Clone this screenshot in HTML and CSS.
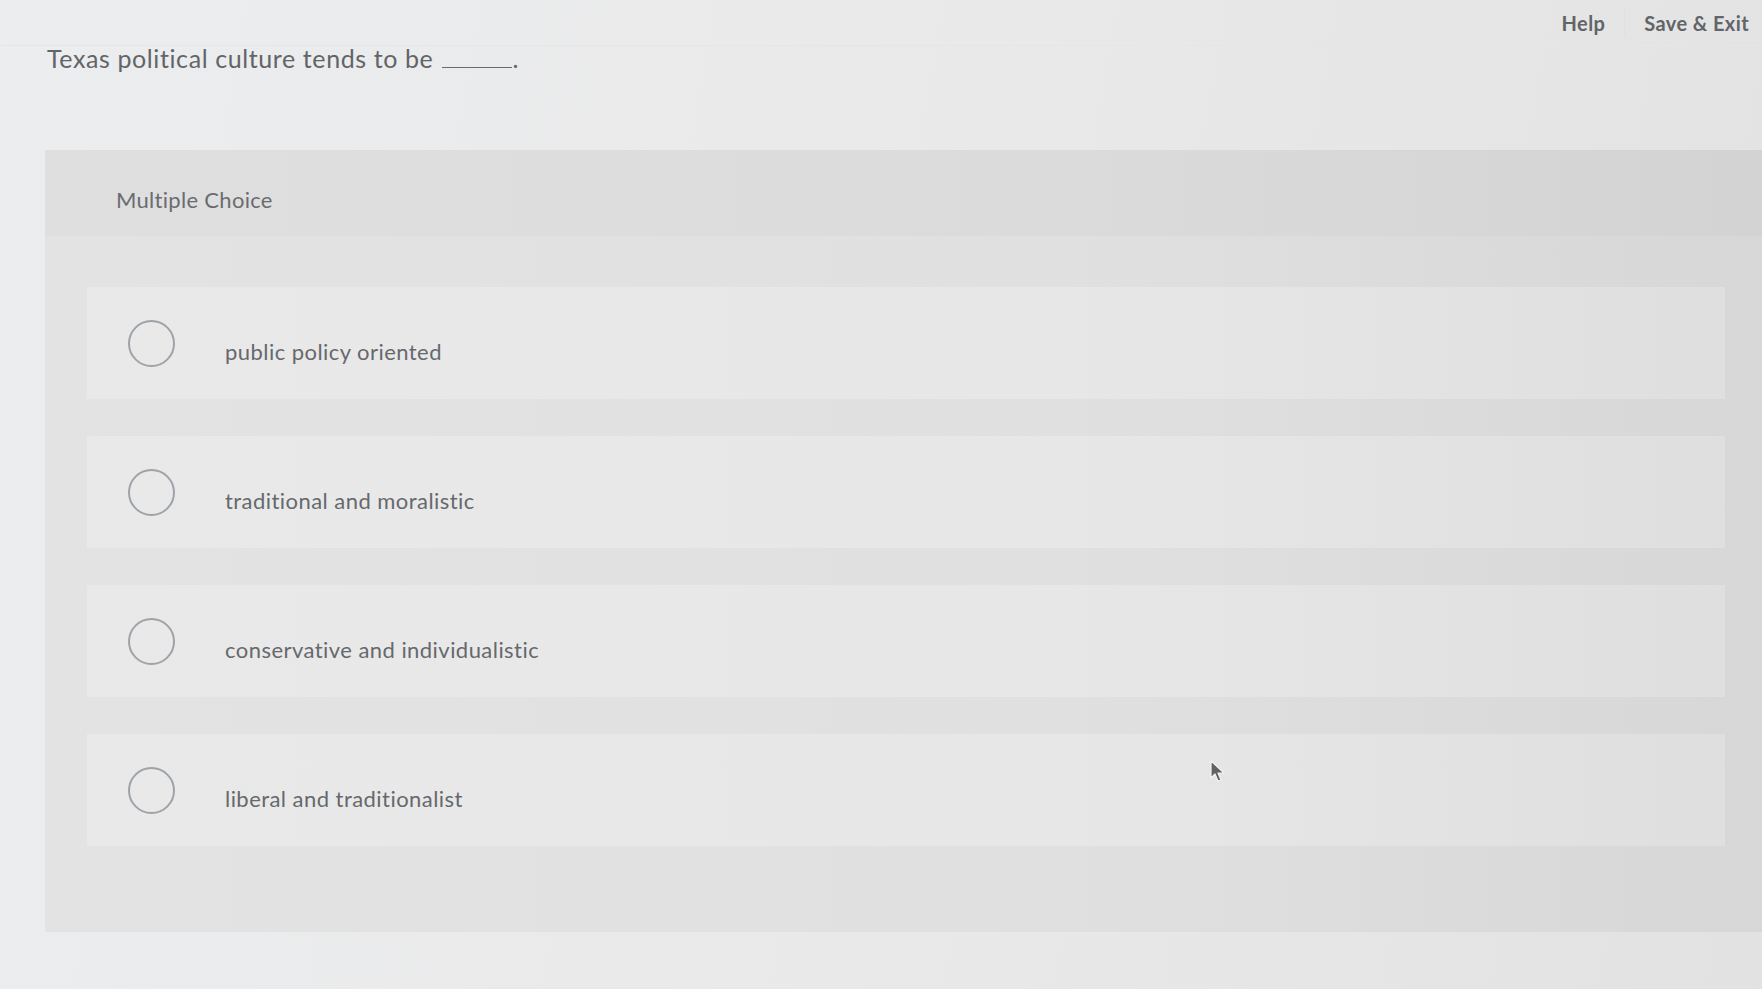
FILE: index.html
```html
<!DOCTYPE html>
<html lang="en">
<head>
<meta charset="utf-8">
<title>Texas political culture</title>
<link rel="stylesheet" href="styles.css">
</head>
<body>
  <header class="topbar">
    <a class="top-link" href="#">Help</a>
    <span class="top-sep"></span>
    <a class="top-link" href="#">Save &amp; Exit</a>
  </header>

  <main class="page">
    <p class="question">Texas political culture tends to be <span class="blank"></span>.</p>

    <section class="panel">
      <div class="panel-head">Multiple Choice</div>
      <ul class="choices">
        <li class="choice"><span class="radio"></span><span class="label">public policy oriented</span></li>
        <li class="choice"><span class="radio"></span><span class="label">traditional and moralistic</span></li>
        <li class="choice"><span class="radio"></span><span class="label">conservative and individualistic</span></li>
        <li class="choice"><span class="radio"></span><span class="label">liberal and traditionalist</span></li>
      </ul>
    </section>
  </main>

  <svg class="cursor" width="16" height="24" viewBox="0 0 16 24" aria-hidden="true">
    <path d="M1 1 L1 18 L5 14 L8 21 L11 20 L8 13 L14 13 Z" fill="#5f6266" stroke="#f2f2f2" stroke-width="1.2" stroke-linejoin="round"/>
  </svg>
</body>
</html>
```

FILE: styles.css
```css
* { box-sizing: border-box; }

html, body {
  margin: 0;
  height: 100%;
}

body {
  font-family: Lato, "Open Sans", "Liberation Sans", sans-serif;
  color: #6a6c70;
  background: linear-gradient(100deg, #ecedee 0%, #e9e9ea 55%, #e2e2e3 100%);
  overflow: hidden;
  position: relative;
}

/* top bar with help / exit links */
.topbar {
  display: flex;
  justify-content: flex-end;
  align-items: center;
  gap: 19px;
  height: 46px;
  padding-right: 13px;
  border-bottom: 1px solid #e5e6e7;
}

.top-link {
  font-size: 20px;
  font-weight: 700;
  letter-spacing: 0.4px;
  color: #626468;
  text-decoration: none;
}

.top-sep {
  width: 1px;
  height: 26px;
  background: #dfe0e1;
}

/* question */
.question {
  margin: 0;
  padding: 0 0 0 47px;
  font-size: 25px;
  letter-spacing: 0.6px;
  line-height: 30px;
  color: #626468;
  position: relative;
  top: -3px;
}

.blank {
  display: inline-block;
  width: 70px;
  border-bottom: 1.5px solid #6a6c70;
  margin-left: 2px;
}

/* answer panel */
.panel {
  margin: 74px 0 0 45px;
  background: linear-gradient(90deg, #e3e3e3 0%, #e0e0e0 60%, #d8d7d8 100%);
  padding-bottom: 86px;
}

.panel-head {
  height: 86px;
  display: flex;
  align-items: center;
  padding: 12px 0 0 71px;
  font-size: 22px;
  letter-spacing: 0.3px;
  color: #6a6c70;
  background: linear-gradient(90deg, #dfdfdf 0%, #dbdbdb 60%, #d4d3d4 100%);
}

.choices {
  list-style: none;
  margin: 0;
  padding: 51px 37px 0 42px;
  display: flex;
  flex-direction: column;
  gap: 37px;
}

.choice {
  height: 112px;
  display: flex;
  align-items: center;
  gap: 50px;
  padding-left: 41px;
  background: linear-gradient(90deg, #e9e9e9 0%, #e7e7e7 60%, #dfdfdf 100%);
}

.radio {
  flex: none;
  width: 47px;
  height: 47px;
  border-radius: 50%;
  border: 2px solid #9ea3a8;
}

.label {
  font-size: 22px;
  letter-spacing: 0.45px;
  color: #66686c;
  position: relative;
  top: 8px;
}

.cursor {
  position: absolute;
  left: 1210px;
  top: 760px;
}
```
